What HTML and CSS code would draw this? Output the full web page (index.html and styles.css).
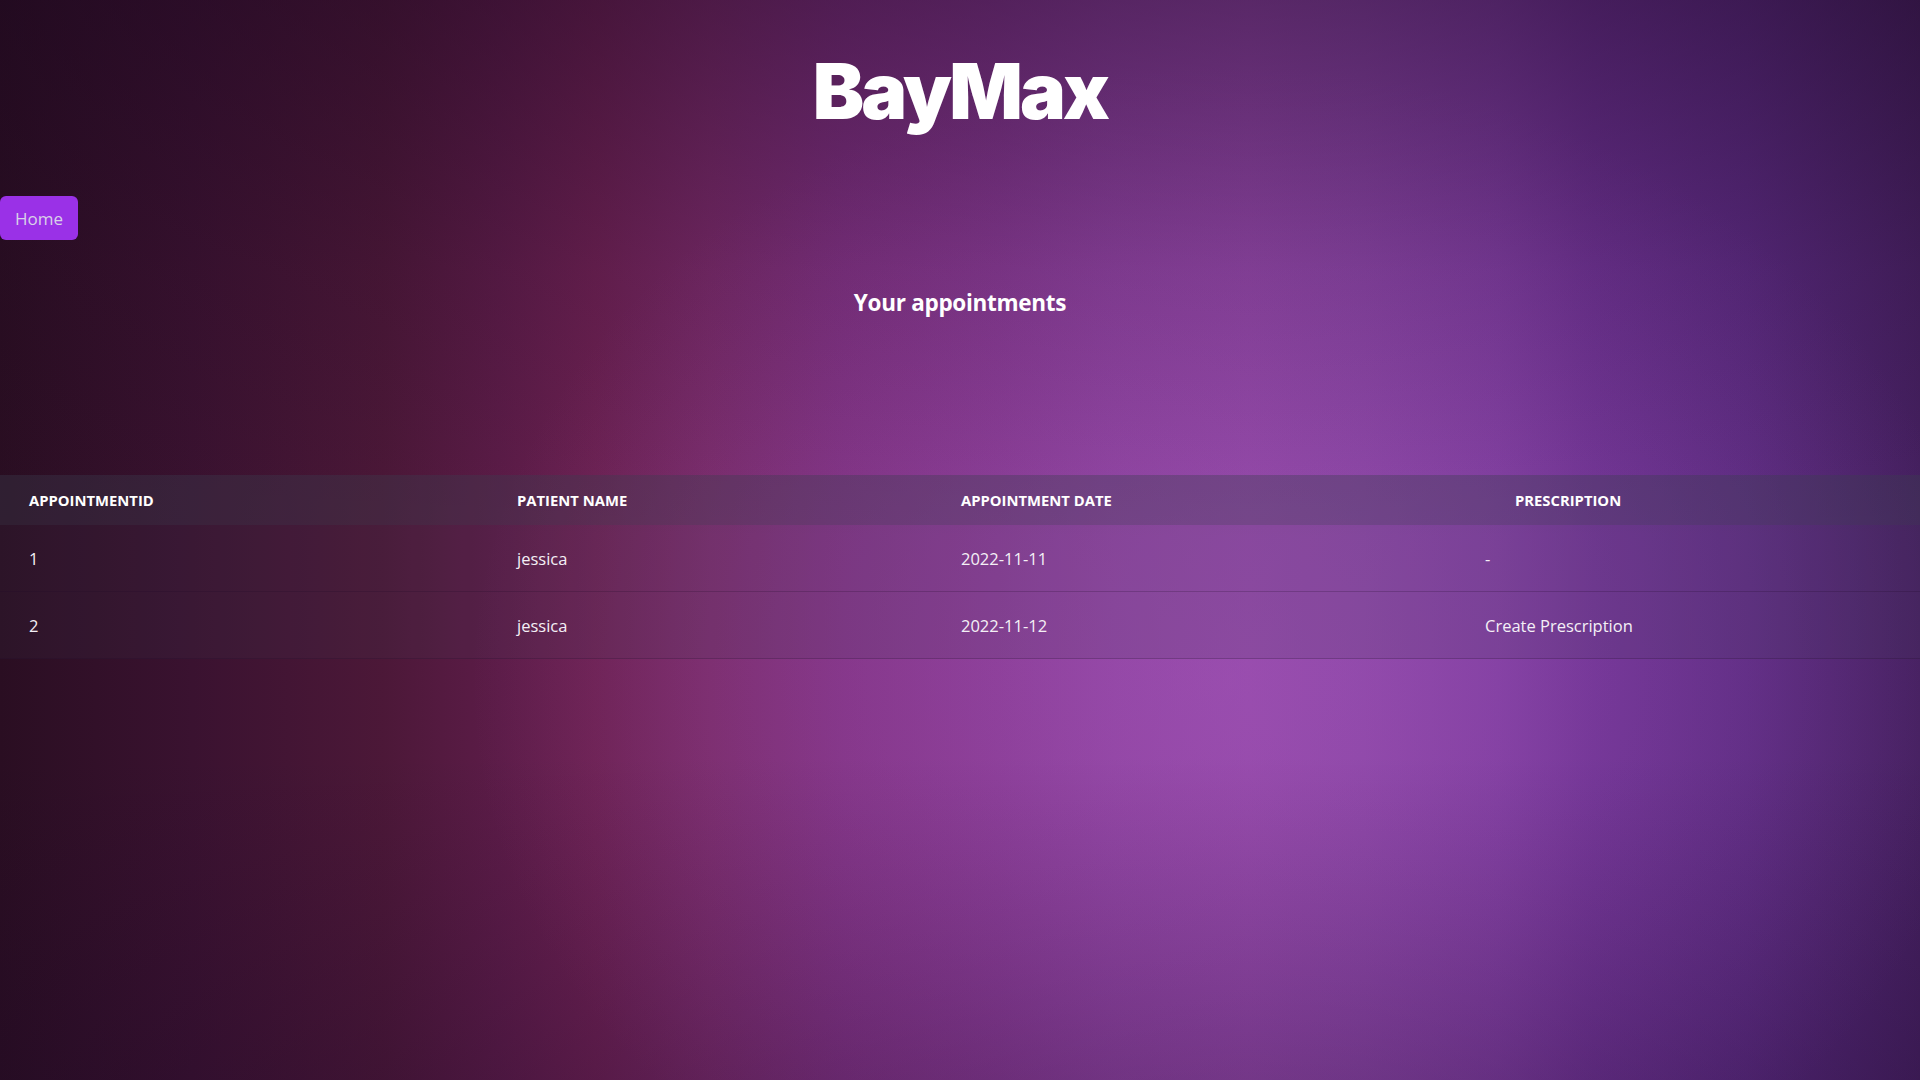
FILE: index.html
```html
<!DOCTYPE html>
<html lang="en">
<head>
<meta charset="utf-8">
<title>BayMax</title>
<link rel="stylesheet" href="styles.css">
</head>
<body>
<header class="site-header">
  <h1 class="brand">BayMax</h1>
</header>
<nav class="nav">
  <a class="btn-home" href="#">Home</a>
</nav>
<main>
  <h2 class="section-title">Your appointments</h2>
  <table class="appt-table">
    <colgroup>
      <col class="c1"><col class="c2"><col class="c3"><col class="c4">
    </colgroup>
    <thead>
      <tr>
        <th>AppointmentID</th>
        <th>Patient Name</th>
        <th>Appointment Date</th>
        <th class="th-presc">Prescription</th>
      </tr>
    </thead>
    <tbody>
      <tr>
        <td>1</td>
        <td>jessica</td>
        <td>2022-11-11</td>
        <td>-</td>
      </tr>
      <tr>
        <td>2</td>
        <td>jessica</td>
        <td>2022-11-12</td>
        <td><a class="link" href="#">Create Prescription</a></td>
      </tr>
    </tbody>
  </table>
</main>
</body>
</html>
```

FILE: styles.css
```css
html, body {
  margin: 0;
  padding: 0;
  height: 100%;
}

body {
  font-family: "Open Sans", "Noto Sans", sans-serif;
  color: #ffffff;
  min-height: 1080px;
  background:
    linear-gradient(180deg, rgba(25, 6, 30, 0.45) 0%, rgba(25, 6, 30, 0.15) 25%, rgba(25, 6, 30, 0) 50%, rgba(25, 6, 30, 0) 70%, rgba(25, 6, 40, 0.25) 100%),
    radial-gradient(ellipse 760px 620px at 64% 63%, rgba(175, 95, 195, 0.35) 0%, rgba(175, 95, 195, 0) 100%),
    linear-gradient(90deg, #2a0e22 0%, #3a1230 10%, #4c1838 20%, #5c1c48 26%, #6c2152 31%, #782a68 37%, #7e3080 44%, #84378f 52%, #8a3f9c 58%, #8e44a4 65%, #8642a2 71%, #7a3a9c 78%, #6a3090 83%, #5a2a80 91%, #452060 100%);
  background-attachment: fixed;
}

.site-header {
  display: flex;
  justify-content: center;
  padding-top: 43px;
}

.brand {
  margin: 0;
  font-family: "Inter", "Open Sans", sans-serif;
  font-weight: 900;
  font-size: 77px;
  line-height: 96px;
  letter-spacing: -2.8px;
  color: #ffffff;
}

.nav {
  display: flex;
  margin-top: 57px;
}

.btn-home {
  display: inline-flex;
  align-items: center;
  height: 44px;
  padding: 0 15px;
  background: #9a31e7;
  color: #d8d2e8;
  border-radius: 6px;
  font-size: 17px;
  text-decoration: none;
}

.section-title {
  margin: 48px 0 0;
  text-align: center;
  font-size: 22.5px;
  line-height: 30px;
  font-weight: 700;
  letter-spacing: -0.3px;
}

.appt-table {
  margin-top: 157px;
  width: 100%;
  table-layout: fixed;
  border-collapse: collapse;
  background: rgba(60, 62, 78, 0.15);
}

.c1 { width: 488px; }
.c2 { width: 444px; }
.c3 { width: 524px; }
.c4 { width: 464px; }

.appt-table thead th {
  height: 50px;
  padding: 0 0 0 29px;
  text-align: left;
  text-transform: uppercase;
  font-size: 14.8px;
  font-weight: 700;
  letter-spacing: 0;
  background: rgba(60, 62, 78, 0.25);
}

.appt-table thead th.th-presc {
  padding-left: 59px;
}

.appt-table tbody td {
  height: 66px;
  padding: 0 0 0 29px;
  font-size: 16.5px;
  color: #f4f0f6;
  border-bottom: 1px solid rgba(30, 10, 40, 0.22);
}

.link {
  color: inherit;
  text-decoration: none;
}
```
